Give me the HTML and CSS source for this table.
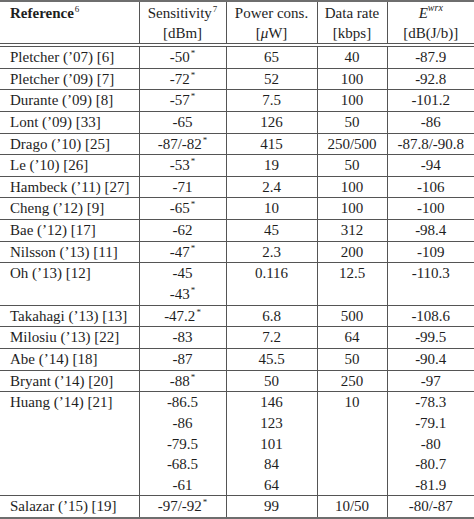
FILE: index.html
```html
<!DOCTYPE html>
<html>
<head>
<meta charset="utf-8">
<link rel="stylesheet" href="styles.css">
</head>
<body>
<table class="tbl">
  <colgroup>
    <col class="c1"><col class="c2"><col class="c3"><col class="c4"><col class="c5">
  </colgroup>
  <thead>
    <tr>
      <th class="ref"><b>Reference</b><sup>6</sup></th>
      <th>Sensitivity<sup>7</sup><br>[dBm]</th>
      <th>Power cons.<br>[<i>μ</i>W]</th>
      <th>Data rate<br>[kbps]</th>
      <th><i>E</i><sup class="ew"><i>wrx</i></sup><br>[dB(J/b)]</th>
    </tr>
  </thead>
  <tbody>
    <tr><td class="ref">Pletcher (’07) [6]</td><td>-50<sup>*</sup></td><td>65</td><td>40</td><td>-87.9</td></tr>
    <tr><td class="ref">Pletcher (’09) [7]</td><td>-72<sup>*</sup></td><td>52</td><td>100</td><td>-92.8</td></tr>
    <tr><td class="ref">Durante (’09) [8]</td><td>-57<sup>*</sup></td><td>7.5</td><td>100</td><td>-101.2</td></tr>
    <tr><td class="ref">Lont (’09) [33]</td><td>-65</td><td>126</td><td>50</td><td>-86</td></tr>
    <tr><td class="ref">Drago (’10) [25]</td><td>-87/-82<sup>*</sup></td><td>415</td><td>250/500</td><td>-87.8/-90.8</td></tr>
    <tr><td class="ref">Le (’10) [26]</td><td>-53<sup>*</sup></td><td>19</td><td>50</td><td>-94</td></tr>
    <tr><td class="ref">Hambeck (’11) [27]</td><td>-71</td><td>2.4</td><td>100</td><td>-106</td></tr>
    <tr><td class="ref">Cheng (’12) [9]</td><td>-65<sup>*</sup></td><td>10</td><td>100</td><td>-100</td></tr>
    <tr><td class="ref">Bae (’12) [17]</td><td>-62</td><td>45</td><td>312</td><td>-98.4</td></tr>
    <tr><td class="ref">Nilsson (’13) [11]</td><td>-47<sup>*</sup></td><td>2.3</td><td>200</td><td>-109</td></tr>
    <tr><td class="ref">Oh (’13) [12]</td><td>-45<br>-43<sup>*</sup></td><td>0.116</td><td>12.5</td><td>-110.3</td></tr>
    <tr><td class="ref">Takahagi (’13) [13]</td><td>-47.2<sup>*</sup></td><td>6.8</td><td>500</td><td>-108.6</td></tr>
    <tr><td class="ref">Milosiu (’13) [22]</td><td>-83</td><td>7.2</td><td>64</td><td>-99.5</td></tr>
    <tr><td class="ref">Abe (’14) [18]</td><td>-87</td><td>45.5</td><td>50</td><td>-90.4</td></tr>
    <tr><td class="ref">Bryant (’14) [20]</td><td>-88<sup>*</sup></td><td>50</td><td>250</td><td>-97</td></tr>
    <tr><td class="ref">Huang (’14) [21]</td><td>-86.5<br>-86<br>-79.5<br>-68.5<br>-61</td><td>146<br>123<br>101<br>84<br>64</td><td>10</td><td>-78.3<br>-79.1<br>-80<br>-80.7<br>-81.9</td></tr>
    <tr><td class="ref">Salazar (’15) [19]</td><td>-97/-92<sup>*</sup></td><td>99</td><td>10/50</td><td>-80/-87</td></tr>
  </tbody>
</table>
</body>
</html>
```

FILE: styles.css
```css
html, body {
  margin: 0;
  padding: 0;
  background: #ffffff;
}

.tbl {
  width: 474px;
  border-collapse: collapse;
  table-layout: fixed;
  font-family: "Liberation Serif", "Times New Roman", serif;
  font-size: 15px;
  color: #1e1e1e;
  border-top: 2px solid #6e6e6e;
  border-bottom: 2px solid #6e6e6e;
}

.c1 { width: 139px; }
.c2 { width: 87px; }
.c3 { width: 91px; }
.c4 { width: 70px; }
.c5 { width: 87px; }

.tbl th,
.tbl td {
  padding: 0;
  text-align: center;
  vertical-align: top;
  border-right: 1px solid #555555;
  white-space: nowrap;
}

.tbl th:last-child,
.tbl td:last-child {
  border-right: none;
}

.tbl th {
  font-weight: normal;
  line-height: 19.5px;
  padding-top: 2px;
  border-bottom: 4px double #555555;
}

.tbl td {
  line-height: 20.64px;
  border-bottom: 1px solid #555555;
}

.tbl tbody tr:last-child td {
  border-bottom: 2px solid #6e6e6e;
}

.tbl .ref {
  text-align: left;
  padding-left: 10px;
}

.tbl sup {
  font-size: 9px;
  line-height: 0;
  vertical-align: 6px;
  margin-left: 1px;
}

.tbl sup.ew {
  font-size: 10px;
  vertical-align: 7px;
  margin-left: 0;
}
```
